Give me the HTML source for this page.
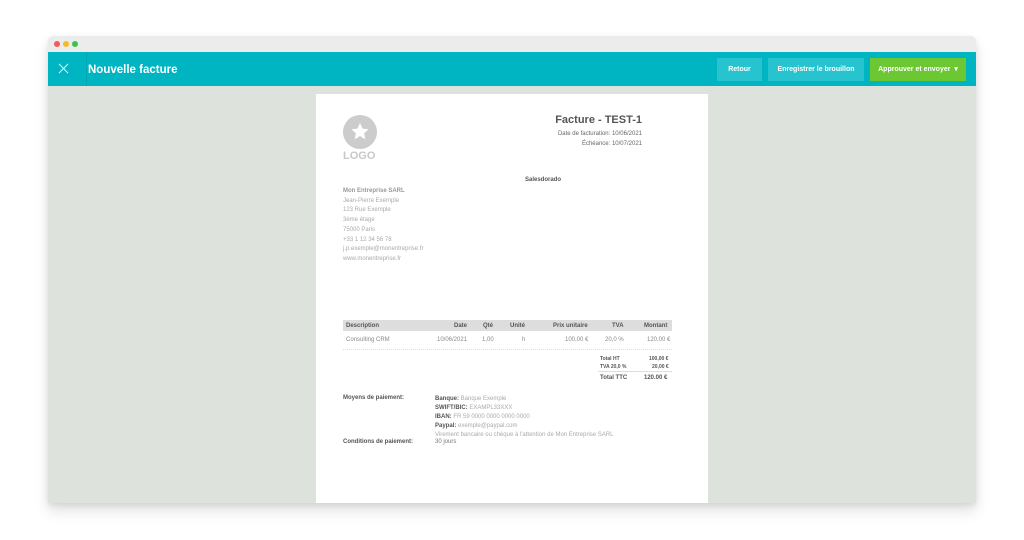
<!DOCTYPE html>
<html><head><meta charset="utf-8"><style>
*{margin:0;padding:0;box-sizing:border-box}
body{width:1024px;height:540px;background:#fff;font-family:"Liberation Sans",sans-serif;position:relative;overflow:hidden}
.win{position:absolute;left:48px;top:36px;width:928px;height:467px;background:#dde2dc;border-radius:6px 6px 0 0;overflow:hidden;box-shadow:0 8px 14px rgba(0,0,0,.12),0 2px 6px rgba(0,0,0,.08)}
.tb{height:16px;background:#ececec;position:relative}
.d{position:absolute;top:5px;width:6px;height:6px;border-radius:50%}
.bar{position:absolute;top:16px;left:0;right:0;height:34px;background:#00b5c2}
.x{position:absolute;left:10px;top:11px;width:11px;height:11px}
.sep{position:absolute;left:38px;top:0;width:1px;height:34px;background:#00a6b2}
.t{position:absolute;left:40px;top:12px;color:#fff;font-size:11.5px;line-height:12px;font-weight:bold}
.btn{position:absolute;top:6px;height:23px;background:#27c4cf;color:#fff;font-size:7px;font-weight:bold;text-align:center;line-height:23px}
.paper{position:absolute;left:268px;top:58px;width:392px;height:420px;background:#fff}
.a{position:absolute;font-size:6px;color:#aaa;white-space:nowrap}
.g{color:#555}
</style></head><body>
<div class="win">
<div class="tb"><div class="d" style="left:6px;background:#f25c55"></div><div class="d" style="left:15px;background:#f5b82e"></div><div class="d" style="left:24px;background:#3fc24a"></div></div>
<div class="bar">
<svg class="x" viewBox="0 0 12 12"><path d="M1 1L11 11M11 1L1 11" stroke="#dff" stroke-width="1.1"/></svg>
<div class="sep"></div>
<div class="t">Nouvelle facture</div>
<div class="btn" style="left:669px;width:45px">Retour</div>
<div class="btn" style="left:720px;width:96px">Enregistrer le brouillon</div>
<div class="btn" style="left:822px;width:96px;background:#6cc832">Approuver et envoyer &nbsp;▾</div>
</div>
<div class="paper">
<svg style="position:absolute;left:27px;top:21px" width="34" height="34" viewBox="0 0 34 34"><circle cx="17" cy="17" r="17" fill="#ccc"/><path d="M17 8l2.6 5.6 6 .6-4.5 4 1.3 6-5.4-3.2-5.4 3.2 1.3-6-4.5-4 6-.6z" fill="#fff"/></svg>
<div class="a" style="left:27px;top:56px;font-size:11px;font-weight:bold;color:#c8c8c8">LOGO</div>
<div class="a g" style="right:66px;top:20px;font-size:11px;font-weight:bold;color:#555">Facture - TEST-1</div>
<div class="a g" style="right:66px;top:37px;color:#666">Date de facturation: 10/06/2021</div>
<div class="a g" style="right:66px;top:47px;color:#666">Échéance: 10/07/2021</div>
<div class="a g" style="left:209px;top:83px;font-weight:bold">Salesdorado</div>
<div class="a" style="left:27px;top:93px;line-height:9.7px"><b style="color:#999">Mon Entreprise SARL</b><br>Jean-Pierre Exemple<br>123 Rue Exemple<br>3ème étage<br>75000 Paris<br>+33 1 12 34 56 78<br>j.p.exemple@monentreprise.fr<br>www.monentreprise.fr</div>
<div style="position:absolute;left:27px;top:226px;width:329px;height:11px;background:#ddd"></div>
<div class="a g" style="left:30px;top:229px;font-weight:bold">Description</div>
<div class="a g" style="left:138px;top:229px;font-weight:bold">Date</div>
<div class="a g" style="left:167px;top:229px;font-weight:bold">Qté</div>
<div class="a g" style="left:194px;top:229px;font-weight:bold">Unité</div>
<div class="a g" style="left:237px;top:229px;font-weight:bold">Prix unitaire</div>
<div class="a g" style="left:296px;top:229px;font-weight:bold">TVA</div>
<div class="a g" style="left:328px;top:229px;font-weight:bold">Montant</div>
<div class="a" style="left:30px;top:243px;color:#888">Consulting CRM</div>
<div class="a" style="left:121px;top:243px;color:#888">10/06/2021</div>
<div class="a" style="left:166px;top:243px;color:#888">1,00</div>
<div class="a" style="left:206px;top:243px;color:#888">h</div>
<div class="a" style="left:249px;top:243px;color:#888">100,00 €</div>
<div class="a" style="left:289px;top:243px;color:#888">20,0 %</div>
<div class="a" style="left:331px;top:243px;color:#888">120,00 €</div>
<div style="position:absolute;left:27px;top:255px;width:329px;border-top:1px dotted #ddd"></div>
<div class="a g" style="left:284px;top:262px;font-size:5px;font-weight:bold">Total HT</div>
<div class="a g" style="left:333px;top:262px;font-size:5px;font-weight:bold">100,00 €</div>
<div class="a g" style="left:284px;top:270px;font-size:5px;font-weight:bold">TVA 20,0 %</div>
<div class="a g" style="left:336px;top:270px;font-size:5px;font-weight:bold">20,00 €</div>
<div style="position:absolute;left:282px;top:277px;width:74px;border-top:1px solid #ddd"></div>
<div class="a g" style="left:284px;top:281px;font-weight:bold">Total TTC</div>
<div class="a g" style="left:328px;top:281px;font-weight:bold">120.00 €</div>
<div class="a g" style="left:27px;top:301px;font-weight:bold">Moyens de paiement:</div>
<div class="a" style="left:119px;top:301px;line-height:9px"><b class="g">Banque:</b> Banque Exemple<br><b class="g">SWIFT/BIC:</b> EXAMPL33XXX<br><b class="g">IBAN:</b> FR 59 0000 0000 0000 0000<br><b class="g">Paypal:</b> exemple@paypal.com<br>Virement bancaire ou chèque à l'attention de Mon Entreprise SARL</div>
<div class="a g" style="left:27px;top:345px;font-weight:bold">Conditions de paiement:</div>
<div class="a" style="left:119px;top:345px;color:#777">30 jours</div>
</div>
</div>
</body></html>
